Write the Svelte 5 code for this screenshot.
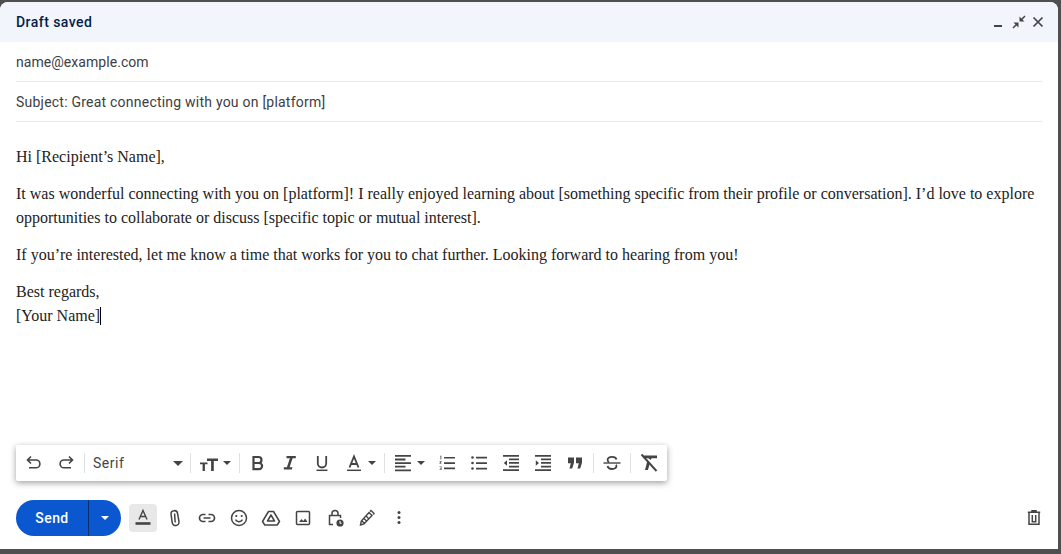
<script>
  let recipient = "name@example.com";
  let subject = "Subject: Great connecting with you on [platform]";
</script>

<div class="screen">
  <div class="compose">
    <header class="title">
      <span>Draft saved</span>
      <div class="title-actions">
        <svg width="14" height="14" viewBox="0 0 14 14"><path d="M2 11h8" stroke="#444" stroke-width="2" /></svg>
        <svg width="14" height="14" viewBox="0 0 14 14"><path d="M13 1 8.5 5.5M1 13l4.500-4.500" stroke="#444" stroke-width="1.500" /><path d="M7.500 1.500v5h5zM6.500 12.500v-5h-5z" fill="#444" /></svg>
        <svg width="12" height="14" viewBox="0 0 12 14"><path d="M1.500 2.500l9 9M10.500 2.500l-9 9" stroke="#444" stroke-width="1.700" /></svg>
      </div>
    </header>

    <div class="field to">{recipient}</div>
    <div class="field subject">{subject}</div>

    <div class="body">
      <p>Hi [Recipient’s Name],</p>
      <p>It was wonderful connecting with you on [platform]! I really enjoyed learning about [something specific from their profile or conversation]. I’d love to explore opportunities to collaborate or discuss [specific topic or mutual interest].</p>
      <p>If you’re interested, let me know a time that works for you to chat further. Looking forward to hearing from you!</p>
      <p>Best regards,<br />[Your Name]<span class="caret"></span></p>
    </div>

    <div class="format-bar">
      <button class="ico" aria-label="Undo"><svg width="20" height="20" viewBox="0 0 20 20" fill="none" stroke="#444" stroke-width="1.600"><path d="M7 3.500 3.500 7 7 10.500M3.500 7H12a3.900 3.900 0 0 1 0 7.800H5" /></svg></button>
      <button class="ico" aria-label="Redo"><svg width="20" height="20" viewBox="0 0 20 20" fill="none" stroke="#444" stroke-width="1.600"><path d="M13 3.500 16.500 7 13 10.500M16.500 7H8a3.900 3.900 0 0 0 0 7.800h7" /></svg></button>
      <i class="sep"></i>
      <div class="font-select"><span>Serif</span><b class="caret-down"></b></div>
      <i class="sep"></i>
      <button class="ico size" aria-label="Size"><svg width="24" height="20" viewBox="0 0 24 20" fill="#444"><path d="M10 5.500h11v2.400h-4.200V18h-2.700V7.900H10zM3 9.500h7.500v1.800H7.900V18H5.600v-6.700H3z" /></svg><b class="caret-down"></b></button>
      <i class="sep"></i>
      <button class="ico" aria-label="Bold"><svg width="20" height="20" viewBox="0 0 20 20" fill="none" stroke="#444" stroke-width="2.200"><path d="M5.500 4h5a3 3 0 0 1 0 6h-5zM5.500 10h5.500a3.100 3.100 0 0 1 0 6.200H5.500z" /></svg></button>
      <button class="ico" aria-label="Italic"><svg width="20" height="20" viewBox="0 0 20 20" fill="#444"><path d="M6.500 3h9.300v2.300h-3.200l-3 8.900H12.500l-.7 2.300H3.800v-2.300h3.100l3-8.900H6.500z" /></svg></button>
      <button class="ico" aria-label="Underline"><svg width="20" height="20" viewBox="0 0 20 20" fill="none" stroke="#444" stroke-width="1.800"><path d="M5.800 3v7.300a4.200 4.200 0 0 0 8.400 0V3" /><path d="M4.500 17.300h11" stroke-width="1.500" /></svg></button>
      <button class="ico color" aria-label="Text color"><svg width="18" height="20" viewBox="0 0 18 20" fill="none" stroke="#444" stroke-width="1.800"><path d="M4.500 14.500 9 3.500l4.500 11M6 11h6" /><path d="M2 17.300h14" stroke-width="1.500" /></svg><b class="caret-down"></b></button>
      <i class="sep"></i>
      <button class="ico align" aria-label="Align"><svg width="18" height="18" viewBox="0 0 18 18" fill="#444"><path d="M1 1h16v1.800H1zM1 4.600h10.500v1.800H1zM1 8.200h16V10H1zM1 11.800h10.500v1.800H1zM1 15.400h16v1.800H1z" /></svg><b class="caret-down"></b></button>
      <button class="ico" aria-label="Numbered list"><svg width="18" height="18" viewBox="0 0 18 18" fill="#444"><path d="M6 3h11v1.600H6zM6 8.300h11v1.600H6zM6 13.600h11v1.600H6zM2.200 1.800h1.100v3.700h-.8V2.600h-.3zM1.500 7h2v.7L2.400 9.200h1.100v.6h-2v-.6l1.200-1.600H1.500zM1.500 12.400h2v3.600h-2v-.6h1.300v-.8h-.9V14h.9v-1H1.500z" /></svg></button>
      <button class="ico" aria-label="Bulleted list"><svg width="18" height="18" viewBox="0 0 18 18" fill="#444"><circle cx="2.500" cy="3.500" r="1.300" /><circle cx="2.500" cy="9" r="1.300" /><circle cx="2.500" cy="14.500" r="1.300" /><path d="M6 2.700h11v1.700H6zM6 8.200h11v1.700H6zM6 13.700h11v1.700H6z" /></svg></button>
      <button class="ico" aria-label="Indent less"><svg width="18" height="18" viewBox="0 0 18 18" fill="#444"><path d="M1 1h16v1.700H1zM1 15.300h16V17H1zM7 4.600h10v1.700H7zM7 8.100h10v1.700H7zM7 11.700h10v1.700H7zM5 6.200v5.600L1.800 9z" /></svg></button>
      <button class="ico" aria-label="Indent more"><svg width="18" height="18" viewBox="0 0 18 18" fill="#444"><path d="M1 1h16v1.700H1zM1 15.300h16V17H1zM7 4.600h10v1.700H7zM7 8.100h10v1.700H7zM7 11.700h10v1.700H7zM1.800 6.200v5.600L5 9z" /></svg></button>
      <button class="ico" aria-label="Quote"><svg width="18" height="18" viewBox="0 0 18 18" fill="#444"><path d="M2 3.500h6v5.200L6.200 14.500H3.500l1.300-5.300H2zM10 3.500h6v5.200l-1.800 5.800h-2.700l1.300-5.300H10z" /></svg></button>
      <i class="sep"></i>
      <button class="ico" aria-label="Strikethrough"><svg width="20" height="20" viewBox="0 0 20 20" fill="none" stroke="#444" stroke-width="1.800"><path d="M1.500 10h17" stroke-width="1.400" /><path d="M14.500 6.500C14 4.500 12.300 3.900 10 3.900c-2.700 0-4.400 1.200-4.400 2.900 0 1 .5 1.800 1.300 2.400M5.500 13c.5 2.200 2.200 3 4.500 3 2.700 0 4.400-1.100 4.400-2.900 0-.5-.1-.9-.4-1.300" /></svg></button>
      <i class="sep"></i>
      <button class="ico" aria-label="Remove formatting"><svg width="20" height="20" viewBox="0 0 20 20" fill="#444"><path d="M4.500 2.500h13.500v2.700h-5.500l-.7 1.800-2.500-1.800H4.500zM8.200 8.500l2.600 2-1.900 6.500H6z" /><path d="M2.500 1.500l15 16.500" stroke="#444" stroke-width="1.900" /></svg></button>
    </div>

    <footer class="actions">
      <div class="send">
        <span class="send-label">Send</span>
        <span class="send-more"><b class="caret-down white"></b></span>
      </div>
      <button class="tool active" aria-label="Formatting"><svg width="20" height="20" viewBox="0 0 20 20" fill="none" stroke="#444" stroke-width="1.400"><path d="M6 11.500 10 2.500l4 9M7.300 8.500h5.400" /><path d="M2.500 15.500h15" stroke-width="2.600" /></svg></button>
      <button class="tool" aria-label="Attach"><svg width="20" height="20" viewBox="0 0 20 20" fill="none" stroke="#444" stroke-width="1.500"><path d="M6.300 6a3.300 3.300 0 0 1 6.600-.2l.8 8.200a3.400 3.400 0 0 1-6.800.4z" transform="rotate(-4 10 10)" /><path d="M9.600 5.500l.6 9" /></svg></button>
      <button class="tool" aria-label="Link"><svg width="20" height="20" viewBox="0 0 20 20" fill="none" stroke="#444" stroke-width="1.700"><path d="M8.500 6.500H6a3.500 3.500 0 0 0 0 7h2.500M11.500 6.500H14a3.500 3.500 0 0 1 0 7h-2.500M6.500 10h7" /></svg></button>
      <button class="tool" aria-label="Emoji"><svg width="20" height="20" viewBox="0 0 20 20" fill="none" stroke="#444" stroke-width="1.500"><circle cx="10" cy="10" r="7.500" /><circle cx="7.300" cy="8" r="1.100" fill="#444" stroke="none" /><circle cx="12.700" cy="8" r="1.100" fill="#444" stroke="none" /><path d="M6.500 11.700a4 4 0 0 0 7 0" /></svg></button>
      <button class="tool" aria-label="Drive"><svg width="20" height="20" viewBox="0 0 20 20" fill="none" stroke="#444" stroke-width="1.500"><path d="M7.500 3.500h5l6 10-2.300 3.500H3.800L1.500 13.500zM10 7l-3.500 6h7z" stroke-linejoin="round" /></svg></button>
      <button class="tool" aria-label="Photo"><svg width="20" height="20" viewBox="0 0 20 20" fill="none" stroke="#444" stroke-width="1.500"><rect x="3.500" y="3.500" width="13" height="13" rx="1" /><path d="M6 14l2.500-3 1.700 2 2-2.500L14.500 14z" fill="#444" stroke="none" /></svg></button>
      <button class="tool" aria-label="Confidential"><svg width="20" height="20" viewBox="0 0 20 20" fill="none" stroke="#444" stroke-width="1.500"><path d="M7 7V5.500a3 3 0 0 1 6 0V7M8 16.500H4.500V7.500h11V10" /><circle cx="15" cy="15" r="3.600" fill="#444" stroke="none" /><path d="M15 13v2.300h1.500" stroke="#fff" stroke-width="1" /></svg></button>
      <button class="tool" aria-label="Signature"><svg width="20" height="20" viewBox="0 0 20 20" fill="none" stroke="#444" stroke-width="1.400"><path d="M3.500 17l.8-4L12 4.500l3 3L7 16zM4.800 12.800l2.700 2.700M7 10.500l3 3M9 8l3 3" /><path d="M13 3.500l1-1 3 3-1 1" /></svg></button>
      <button class="tool" aria-label="More"><svg width="20" height="20" viewBox="0 0 20 20" fill="#444"><circle cx="10" cy="4.500" r="1.500" /><circle cx="10" cy="9.500" r="1.500" /><circle cx="10" cy="14.500" r="1.500" /></svg></button>
      <button class="tool trash" aria-label="Delete"><svg width="20" height="20" viewBox="0 0 20 20" fill="none" stroke="#444" stroke-width="1.500"><path d="M3.800 4.300h12.400M8 4V2.800h4V4M5 4.500V16.300h10V4.500M8.300 7v6.800h3.400V7" /></svg></button>
    </footer>
  </div>
</div>

<style>
  :global(body) {
    margin: 0;
    background: #4f4f4f;
  }

  .screen {
    width: 1061px;
    height: 554px;
    padding: 2px 3px 5px 0;
    box-sizing: border-box;
  }

  .compose {
    height: 100%;
    background: #fff;
    border-radius: 8px 8px 0 0;
    display: flex;
    flex-direction: column;
    overflow: hidden;
    font-family: Roboto, "Liberation Sans", sans-serif;
  }

  .title {
    height: 40px;
    flex: none;
    background: #f2f6fc;
    display: flex;
    align-items: center;
    justify-content: space-between;
    padding: 0 14px 0 16px;
    box-sizing: border-box;
    color: #041e49;
    font-size: 14px;
    font-weight: 500;
    letter-spacing: 0.45px;
  }

  .title-actions {
    display: flex;
    gap: 6px;
  }

  .field {
    height: 40px;
    margin: 0 16px;
    flex: none;
    box-sizing: border-box;
    border-bottom: 1px solid #e8eaed;
    line-height: 40px;
    font-size: 14px;
    color: #3c4043;
  }

  .field.to {
    letter-spacing: 0.05px;
  }

  .field.subject {
    line-height: 41px;
    letter-spacing: 0.225px;
  }

  .body {
    flex: 1;
    padding: 23px 16px 0;
    font-family: "Liberation Serif", "Times New Roman", serif;
    font-size: 16px;
    line-height: 24px;
    color: #222;
  }

  .body p {
    margin: 0 0 13px;
  }

  .caret {
    display: inline-block;
    width: 1px;
    height: 18px;
    background: #000;
    vertical-align: -4px;
  }

  button {
    border: 0;
    padding: 0;
    background: none;
    display: inline-flex;
    align-items: center;
    justify-content: center;
  }

  .format-bar {
    align-self: flex-start;
    width: 651px;
    height: 36px;
    margin-left: 16px;
    flex: none;
    box-sizing: border-box;
    padding: 0 2px;
    display: flex;
    align-items: center;
    background: #fff;
    border-radius: 2px;
    box-shadow: 0 2px 6px rgba(0, 0, 0, 0.38);
  }

  .ico {
    width: 32px;
    height: 28px;
    flex: none;
  }

  .ico.size,
  .ico.color,
  .ico.align {
    width: 44px;
    justify-content: flex-start;
  }

  .ico.size {
    padding-left: 4px;
    gap: 2px;
  }

  .ico.color,
  .ico.align {
    padding-left: 7px;
    gap: 5px;
  }

  .ico .caret-down {
    border-left-width: 4px;
    border-right-width: 4px;
    border-top-width: 4px;
  }

  .sep {
    width: 1px;
    height: 20px;
    margin: 0 2px;
    background: #e0e0e0;
    flex: none;
  }

  .font-select {
    width: 101px;
    flex: none;
    box-sizing: border-box;
    padding: 0 5px 0 6px;
    display: flex;
    align-items: center;
    justify-content: space-between;
    font-size: 14px;
    letter-spacing: 0.5px;
    color: #444;
  }

  .caret-down {
    width: 0;
    height: 0;
    border-left: 5px solid transparent;
    border-right: 5px solid transparent;
    border-top: 5px solid #444;
  }

  .caret-down.white {
    border-top-color: #fff;
    border-left-width: 4px;
    border-right-width: 4px;
    border-top-width: 4px;
  }

  .actions {
    height: 36px;
    margin: 19px 0 13px;
    padding: 0 8px 0 16px;
    flex: none;
    display: flex;
    align-items: center;
  }

  .send {
    width: 105px;
    height: 36px;
    border-radius: 18px;
    background: #0b57d0;
    color: #fff;
    display: flex;
    margin-right: 8px;
    font-size: 14px;
    font-weight: 500;
    letter-spacing: 0.4px;
  }

  .send-label {
    width: 72px;
    display: flex;
    align-items: center;
    justify-content: center;
    border-right: 1px solid #08306f;
  }

  .send-more {
    flex: 1;
    display: flex;
    align-items: center;
    justify-content: center;
  }

  .tool {
    width: 32px;
    height: 28px;
    flex: none;
  }

  .tool.active {
    width: 28px;
    background: #e8e8e8;
    border-radius: 4px;
    margin-right: 2px;
  }

  .tool.trash {
    margin-left: auto;
  }
</style>
